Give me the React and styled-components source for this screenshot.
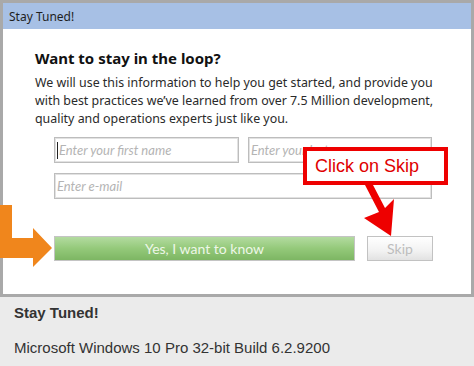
import styled, { createGlobalStyle } from "styled-components";

const GlobalStyle = createGlobalStyle`
  html, body {
    margin: 0;
    padding: 0;
    background: #ebebeb;
  }
  body {
    width: 474px;
    height: 366px;
    overflow: hidden;
  }
`;

const Page = styled.div`
  position: relative;
  width: 474px;
  height: 366px;
  background: #ebebeb;
  overflow: hidden;
`;

const Window = styled.div`
  height: 297px;
  box-sizing: border-box;
  border: 3px solid #a9a9a9;
  display: flex;
  flex-direction: column;
  background: #fff;
`;

const TitleBar = styled.div`
  height: 26px;
  background: #a7c0e5;
  display: flex;
  align-items: center;
  padding-left: 6px;
  font-family: "Noto Sans", sans-serif;
  font-size: 12px;
  color: #1e1e1e;
`;

const Content = styled.div`
  flex: 1;
  padding: 19px 0 0 32px;
  font-family: "Noto Sans", sans-serif;
  color: #1a1a1a;
`;

const Heading = styled.h2`
  margin: 0;
  font-size: 15px;
  line-height: 20px;
  font-weight: 700;
  color: #111;
`;

const Text = styled.p`
  margin: 6px 0 0;
  font-size: 12.4px;
  line-height: 18px;
  color: #2a2a2a;
  white-space: nowrap;
`;

const Form = styled.div`
  margin: 9px 0 0 19px;
  width: 378px;
  display: flex;
  flex-direction: column;
  gap: 10px;
`;

const Row = styled.div`
  display: flex;
  gap: ${(p) => p.$gap || 9}px;
`;

const Field = styled.div`
  position: relative;
  width: ${(p) => p.$w}px;
  height: 26px;
  box-sizing: border-box;
  border: 1px solid #bdbdbd;
  box-shadow: inset 0 0 0 1px #e2e2e2;
  display: flex;
  align-items: center;
  padding-left: 2px;
  font-family: "Lato", sans-serif;
  font-style: italic;
  font-size: 13px;
  color: #b4b4b4;
  white-space: nowrap;
  overflow: hidden;
`;

const Caret = styled.span`
  width: 1px;
  height: 17px;
  background: #222;
  margin-right: 1px;
`;

const Buttons = styled.div`
  margin: 37px 0 0 19px;
  display: flex;
  gap: 12px;
`;

const GreenButton = styled.div`
  width: 301px;
  height: 25px;
  box-sizing: border-box;
  border: 1px solid #c4c4c4;
  background: linear-gradient(to bottom, #b3dba0 0%, #94c97a 50%, #7db663 100%);
  display: flex;
  align-items: center;
  justify-content: center;
  font-family: "Lato", sans-serif;
  font-size: 14px;
  color: #eef7e8;
`;

const SkipButton = styled.div`
  width: 66px;
  height: 25px;
  box-sizing: border-box;
  border: 1px solid #c2c2c2;
  background: linear-gradient(to bottom, #ffffff 0%, #f2f2f2 60%, #e2e2e2 100%);
  display: flex;
  align-items: center;
  justify-content: center;
  font-family: "Lato", sans-serif;
  font-size: 14px;
  color: #bdbdbd;
`;

const Footer = styled.div`
  padding: 6px 0 0 14px;
  font-family: "Liberation Sans", Arial, sans-serif;
  font-size: 15px;
  color: #333;
  display: flex;
  flex-direction: column;
  gap: 15px;
`;

const FooterTitle = styled.div`
  font-weight: 700;
  line-height: 20px;
`;

const FooterLine = styled.div`
  line-height: 20px;
`;

const Callout = styled.div`
  position: absolute;
  left: 303px;
  top: 147px;
  width: 145px;
  height: 38px;
  box-sizing: border-box;
  border: 4px solid #ee0000;
  background: #fff;
  display: flex;
  align-items: center;
  padding-left: 8px;
  font-family: "Liberation Sans", Arial, sans-serif;
  font-size: 18px;
  color: #e00000;
  white-space: nowrap;
`;

const Overlay = styled.svg`
  position: absolute;
  left: 0;
  top: 0;
  pointer-events: none;
`;

export default function App() {
  return (
    <Page>
      <GlobalStyle />
      <Window>
        <TitleBar>Stay Tuned!</TitleBar>
        <Content>
          <Heading>Want to stay in the loop?</Heading>
          <Text>
            We will use this information to help you get started, and provide you
            <br />
            with best practices we’ve learned from over 7.5 Million development,
            <br />
            quality and operations experts just like you.
          </Text>
          <Form>
            <Row>
              <Field $w={185}>
                <Caret />
                Enter your first name
              </Field>
              <Field $w={184}>Enter your last name</Field>
            </Row>
            <Row>
              <Field $w={378}>Enter e-mail</Field>
            </Row>
          </Form>
          <Buttons>
            <GreenButton>Yes, I want to know</GreenButton>
            <SkipButton>Skip</SkipButton>
          </Buttons>
        </Content>
      </Window>
      <Footer>
        <FooterTitle>Stay Tuned!</FooterTitle>
        <FooterLine>Microsoft Windows 10 Pro 32-bit Build 6.2.9200</FooterLine>
      </Footer>
      <Callout>Click on Skip</Callout>
      <Overlay width="474" height="366" viewBox="0 0 474 366">
        <polygon
          points="365,185 373,185 385,208 394,199 391,236 364,218 379,212"
          fill="#ee0000"
        />
        <polygon
          points="0,205 12,205 12,238 33,238 33,228 52,248 33,267 33,258 0,258"
          fill="#f0861c"
        />
      </Overlay>
    </Page>
  );
}
